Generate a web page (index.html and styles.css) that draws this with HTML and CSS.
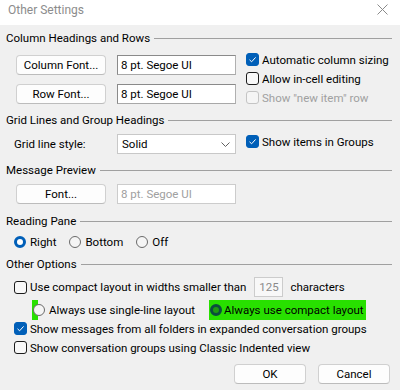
FILE: index.html
```html
<!DOCTYPE html>
<html>
<head>
<meta charset="utf-8">
<link rel="stylesheet" href="styles.css">
</head>
<body>
<div class="dialog">
  <div class="titlebar">
    <span class="title">Other Settings</span>
    <svg class="close" width="11" height="11" viewBox="0 0 11 11"><path d="M0.5 0.5 L10.5 10.5 M10.5 0.5 L0.5 10.5" stroke="#8a8a8a" stroke-width="1" fill="none"/></svg>
  </div>
  <div class="content">
    <div class="ghead h1"><span>Column Headings and Rows</span><div class="rule"></div></div>
    <div class="sec1">
      <div class="fontgrid">
        <button class="btn">Column Font...</button>
        <div class="field">8 pt. Segoe UI</div>
        <button class="btn">Row Font...</button>
        <div class="field">8 pt. Segoe UI</div>
      </div>
      <div class="checks">
        <div class="crow"><span class="cb on"><svg width="13" height="13" viewBox="0 0 13 13"><path d="M3.5 6.8 L5.6 8.8 L9.6 4.4" stroke="#fff" stroke-width="1" fill="none"/></svg></span>Automatic column sizing</div>
        <div class="crow"><span class="cb"></span>Allow in-cell editing</div>
        <div class="crow disabled"><span class="cb dis"></span>Show "new item" row</div>
      </div>
    </div>

    <div class="ghead h2"><span>Grid Lines and Group Headings</span><div class="rule"></div></div>
    <div class="sec2">
      <span class="label">Grid line style:</span>
      <div class="select"><span>Solid</span><svg width="9" height="5" viewBox="0 0 9 5"><path d="M0.5 0.5 L4.5 4.5 L8.5 0.5" stroke="#606060" stroke-width="1" fill="none"/></svg></div>
      <div class="crow"><span class="cb on"><svg width="13" height="13" viewBox="0 0 13 13"><path d="M3.5 6.8 L5.6 8.8 L9.6 4.4" stroke="#fff" stroke-width="1" fill="none"/></svg></span>Show items in Groups</div>
    </div>

    <div class="ghead h3"><span>Message Preview</span><div class="rule"></div></div>
    <div class="sec3">
      <button class="btn">Font...</button>
      <div class="field dis">8 pt. Segoe UI</div>
    </div>

    <div class="ghead h4"><span>Reading Pane</span><div class="rule"></div></div>
    <div class="radios">
      <div class="rrow"><span class="rb on"></span>Right</div>
      <div class="rrow"><span class="rb"></span>Bottom</div>
      <div class="rrow"><span class="rb"></span>Off</div>
    </div>

    <div class="ghead h5"><span>Other Options</span><div class="rule"></div></div>
    <div class="compact">
      <span class="cb"></span>
      <span class="ctext">Use compact layout in widths smaller than</span>
      <div class="small-field">125</div>
      <span class="chars">characters</span>
    </div>
    <div class="subradios">
      <div class="rrow single"><span class="gstrip"></span><span class="rb"></span>Always use single-line layout</div>
      <div class="rrow hl"><span class="rb green"></span>Always use compact layout</div>
    </div>
    <div class="lower">
      <div class="crow"><span class="cb on"><svg width="13" height="13" viewBox="0 0 13 13"><path d="M3.5 6.8 L5.6 8.8 L9.6 4.4" stroke="#fff" stroke-width="1" fill="none"/></svg></span>Show messages from all folders in expanded conversation groups</div>
      <div class="crow"><span class="cb"></span>Show conversation groups using Classic Indented view</div>
    </div>
    <div class="actions">
      <button class="btn act">OK</button>
      <button class="btn act">Cancel</button>
    </div>
  </div>
</div>
</body>
</html>
```

FILE: styles.css
```css
* { box-sizing: border-box; }
html, body {
  margin: 0;
  padding: 0;
}
body {
  width: 400px;
  height: 390px;
  overflow: hidden;
  background: #f0f0f0;
  font-family: Roboto, "Noto Sans", sans-serif;
  font-size: 11.5px;
  color: #000;
}
.dialog {
  width: 400px;
  height: 390px;
  display: flex;
  flex-direction: column;
}
.titlebar {
  height: 25px;
  background: #fff;
  display: flex;
  justify-content: space-between;
  align-items: flex-start;
  padding: 2px 12px 0 8px;
}
.title {
  color: #8c8c8c;
  font-size: 12px;
  line-height: 16px;
}
.close {
  margin-top: 2px;
}
.content {
  padding: 0 8px 0 6px;
  display: flex;
  flex-direction: column;
}
.ghead {
  display: flex;
  align-items: center;
  gap: 4px;
  height: 16px;
  line-height: 16px;
}
.rule {
  flex: 1;
  height: 1px;
  background: #a0a0a0;
}
.h1 { margin-top: 5px; }
.h2 { margin-top: 5px; }
.h3 { margin-top: 8px; }
.h4 { margin-top: 9px; }
.h5 { margin-top: 6px; }

.btn {
  font: inherit;
  color: #000;
  background: #fdfdfd;
  border: 1px solid #d0d0d0;
  border-bottom-color: #bcbcbc;
  border-radius: 4px;
  height: 20px;
  padding: 0;
  line-height: 16px;
}
.field {
  height: 20px;
  background: #fff;
  border: 1px solid #8a8a8a;
  border-bottom-color: #a8a8a8;
  border-right-color: #b0b0b0;
  padding: 0 3px;
  line-height: 18px;
}
.field.dis {
  border-color: #cccccc;
  color: #a0a0a0;
}
.sec1 {
  display: flex;
  align-items: flex-start;
}
.fontgrid {
  display: grid;
  grid-template-columns: 90px 119px;
  column-gap: 11px;
  row-gap: 9px;
  margin-left: 10px;
  margin-top: 9px;
}
.checks {
  margin-left: 10px;
  margin-top: 4px;
  display: flex;
  flex-direction: column;
}
.crow {
  display: flex;
  align-items: center;
  gap: 3px;
  height: 19px;
  white-space: nowrap;
}
.crow.disabled { color: #a0a0a0; }
.cb {
  width: 13px;
  height: 13px;
  flex: none;
  border: 1px solid #1b1b1b;
  border-radius: 3px;
  background: #f8f8f8;
  display: block;
}
.cb svg { display: block; margin: -1px; }
.cb.on {
  background: #005fb8;
  border-color: #005fb8;
}
.cb.dis {
  border-color: #c4c4c4;
  background: #f5f5f5;
}

.sec2 {
  display: flex;
  align-items: flex-start;
  margin-top: 4px;
}
.sec2 .label {
  width: 111px;
  padding-left: 8px;
  line-height: 20px;
  margin-top: 2px;
}
.select {
  width: 119px;
  height: 20px;
  margin-top: 2px;
  background: #fff;
  border: 1px solid #c8c8c8;
  display: flex;
  align-items: center;
  justify-content: space-between;
  padding: 0 5px 0 4px;
}
.sec2 .crow { margin-left: 10px; }

.sec3 {
  display: grid;
  grid-template-columns: 90px 119px;
  column-gap: 11px;
  margin-left: 10px;
  margin-top: 6px;
}

.radios {
  display: flex;
  gap: 13px;
  margin-top: 5px;
  margin-left: 8px;
}
.rrow {
  display: flex;
  align-items: center;
  gap: 4px;
  height: 16px;
  white-space: nowrap;
}
.rb {
  width: 12px;
  height: 12px;
  flex: none;
  border-radius: 50%;
  border: 1px solid #6a6a6a;
  background: #f5f5f5;
  display: block;
}
.rb.on {
  border: 3.5px solid #005fb8;
  background: #fff;
}
.rb.green {
  border: 3.5px solid #0b4e3e;
  background: #1e9a10;
}

.compact {
  display: flex;
  align-items: center;
  margin-top: 5px;
  margin-left: 8px;
  height: 20px;
}
.compact .cb { margin-right: 3px; }
.small-field {
  width: 29px;
  height: 20px;
  margin-left: 8px;
  border: 1px solid #cccccc;
  background: #f8f8f8;
  color: #8a8a8a;
  text-align: center;
  line-height: 18px;
}
.chars { margin-left: 7px; }

.subradios {
  display: flex;
  margin-top: 3px;
  margin-left: 26px;
  height: 20px;
}
.subradios .rrow { height: 20px; }
.single {
  position: relative;
  padding-left: 1px;
}
.gstrip {
  position: absolute;
  left: 0;
  top: 0;
  width: 6px;
  height: 20px;
  background: #28e000;
}
.single .rb { position: relative; }
.hl {
  margin-left: 14px;
  background: #28e000;
  padding: 0 2px 0 1px;
  gap: 2px;
}
.lower {
  display: flex;
  flex-direction: column;
  margin-top: -1px;
  margin-left: 8px;
}
.actions {
  display: flex;
  justify-content: flex-end;
  gap: 12px;
  margin-top: 7px;
  padding-right: 2px;
}
.btn.act {
  width: 72px;
}
```
